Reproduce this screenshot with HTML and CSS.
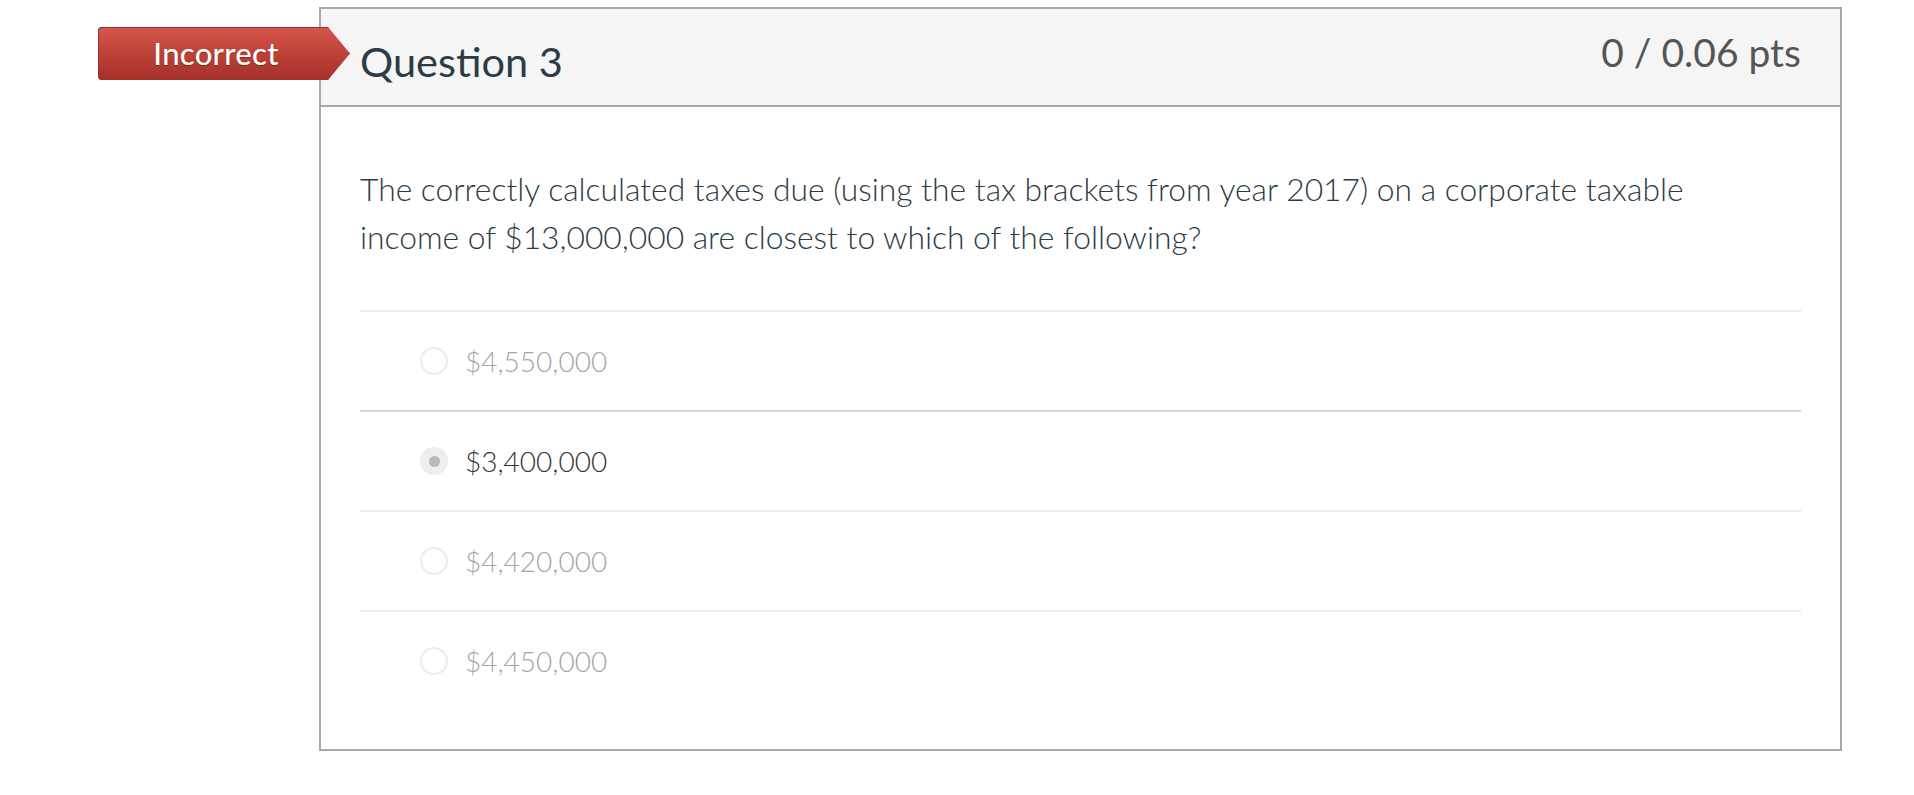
FILE: index.html
```html
<!DOCTYPE html>
<html lang="en">
<head>
  <meta charset="UTF-8" />
  <meta name="viewport" content="width=device-width, initial-scale=1.0"/>
  <title>Quiz Results - Question 3</title>
  <link rel="stylesheet" href="styles.css">
</head>
<body>
  <div class="question-wrap">
    <!-- Result arrow -->
    <div class="answer-arrow incorrect">Incorrect</div>

    <div class="question">
      <div class="question-header">
        <h2 class="question-title">Question 3</h2>
        <span class="question-points">0 / 0.06 pts</span>
      </div>

      <div class="question-body">
        <p class="question-text">The correctly calculated taxes due (using the tax brackets from year 2017) on a corporate taxable income of $13,000,000 are closest to which of the following?</p>

        <div class="answers">
          <div class="answer">
            <span class="radio"></span>
            <span class="answer-label">$4,550,000</span>
          </div>
          <div class="answer selected">
            <span class="radio"></span>
            <span class="answer-label">$3,400,000</span>
          </div>
          <div class="answer">
            <span class="radio"></span>
            <span class="answer-label">$4,420,000</span>
          </div>
          <div class="answer">
            <span class="radio"></span>
            <span class="answer-label">$4,450,000</span>
          </div>
        </div>
      </div>
    </div>
  </div>
</body>
</html>
```

FILE: styles.css
```css
body {
  font-family: 'Lato', 'Open Sans', sans-serif;
  background-color: #fff;
  color: #2d3b45;
  margin: 0;
  padding: 0;
}

.question-wrap {
  position: relative;
  width: 1523px;
  margin: 7px 0 0 319px;
}

.answer-arrow {
  position: absolute;
  left: -221px;
  top: 20px;
  width: 252px;
  height: 53px;
  padding-right: 16px;
  box-sizing: border-box;
  line-height: 53px;
  text-align: center;
  font-size: 31px;
  font-weight: 500;
  letter-spacing: 0.3px;
  color: #fff;
  text-shadow: 0 1px 1px rgba(0, 0, 0, 0.35);
  border-radius: 4px 0 0 4px;
  clip-path: polygon(0 0, 230px 0, 100% 50%, 230px 100%, 0 100%);
  z-index: 2;
}

.answer-arrow.incorrect {
  background: linear-gradient(to bottom, #d6564d, #bb4036 55%, #a4302a);
  box-shadow: inset 0 0 0 1px #9c322b;
}

.question {
  border: 2px solid #a8a8a8;
  background-color: #fff;
}

.question-header {
  height: 96px;
  background-color: #f5f5f5;
  border-bottom: 2px solid #a8a8a8;
  padding: 0 39px;
  display: flex;
  justify-content: space-between;
  align-items: flex-start;
}

.question-title {
  margin: 0;
  padding-top: 32px;
  font-size: 41.5px;
  line-height: 41px;
  font-weight: 400;
  color: #2d3b45;
}

.question-points {
  padding-top: 24px;
  font-size: 39px;
  line-height: 38px;
  color: #555;
}

.question-body {
  padding: 58px 39px 39px 39px;
}

.question-text {
  max-width: 1390px;
  margin: 0 0 49px 0;
  font-size: 31.8px;
  line-height: 48px;
  font-weight: 300;
  color: #2d3b45;
}

.answer {
  height: 98px;
  border-top: 2px solid #ececec;
  display: flex;
  align-items: center;
  padding-left: 60px;
  gap: 17px;
}

.answer.selected {
  border-top-color: #d9d9d9;
}

.radio {
  width: 24px;
  height: 24px;
  border: 2px solid #ececec;
  border-radius: 50%;
  background-color: #fff;
  display: flex;
  align-items: center;
  justify-content: center;
}

.answer.selected .radio {
  background-color: #eeeeee;
}

.answer.selected .radio::after {
  content: "";
  width: 11px;
  height: 11px;
  border-radius: 50%;
  background-color: #b8b8b8;
}

.answer-label {
  font-size: 28px;
  font-weight: 300;
  color: #a5a5a5;
}

.answer.selected .answer-label {
  color: #333;
}
```
